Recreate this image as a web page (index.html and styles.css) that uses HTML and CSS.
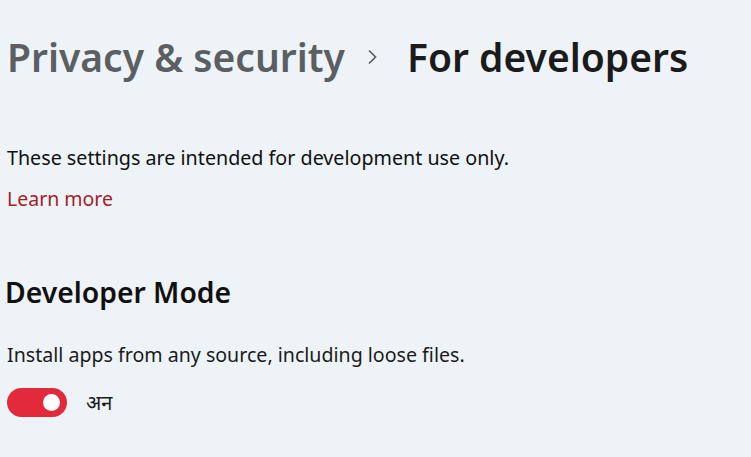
FILE: index.html
```html
<!DOCTYPE html>
<html>
<head>
<meta charset="utf-8">
<link rel="stylesheet" href="styles.css">
</head>
<body>
<div class="page">
  <div class="breadcrumb">
    <span class="crumb-parent">Privacy &amp; security</span>
    <svg class="chev" width="12" height="16" viewBox="0 0 12 16"><path d="M3 1.5 L9.5 8 L3 14.5" fill="none" stroke="#5b5f63" stroke-width="1.7"/></svg>
    <span class="crumb-current">For developers</span>
  </div>
  <p class="intro">These settings are intended for development use only.</p>
  <a class="link" href="#">Learn more</a>
  <h2 class="section">Developer Mode</h2>
  <p class="desc">Install apps from any source, including loose files.</p>
  <div class="toggle-row">
    <span class="toggle"><span class="knob"></span></span>
    <span class="toggle-label">अन</span>
  </div>
</div>
</body>
</html>
```
FILE: styles.css
```css
html, body { margin: 0; padding: 0; }
body {
  background: #edf3f7;
  font-family: "Noto Sans", "Open Sans", sans-serif;
  width: 751px;
  height: 457px;
  overflow: hidden;
}
.page { padding: 26px 0 0 7px; }
.breadcrumb {
  display: flex;
  align-items: center;
  height: 60px;
  font-size: 39px;
  font-weight: 600;
}
.crumb-parent { color: #5b5f63; }
.chev { margin: 1px 29px 0 21px; }
.crumb-current { color: #1b1b1b; }
.intro {
  margin: 58px 0 0;
  font-size: 19.7px;
  color: #111;
  line-height: 28px;
}
.link {
  display: block;
  margin-top: 13px;
  color: #a51d26;
  text-decoration: none;
  font-size: 19.5px;
  line-height: 28px;
}
.section {
  margin: 62px 0 0 -2px;
  font-size: 28.3px;
  font-weight: 600;
  color: #111;
  line-height: 34px;
}
.desc {
  margin: 33px 0 0;
  font-size: 19.6px;
  color: #1b1b1b;
  line-height: 26px;
}
.toggle-row {
  display: flex;
  align-items: center;
  margin-top: 20px;
}
.toggle {
  width: 60px;
  height: 29px;
  border-radius: 15px;
  background: #e32a3b;
  display: flex;
  align-items: center;
  justify-content: flex-end;
  padding-right: 7px;
  box-sizing: border-box;
}
.knob {
  width: 17px;
  height: 17px;
  border-radius: 50%;
  background: #fff;
}
.toggle-label {
  margin-left: 19px;
  font-size: 20px;
  color: #1b1b1b;
}
```
